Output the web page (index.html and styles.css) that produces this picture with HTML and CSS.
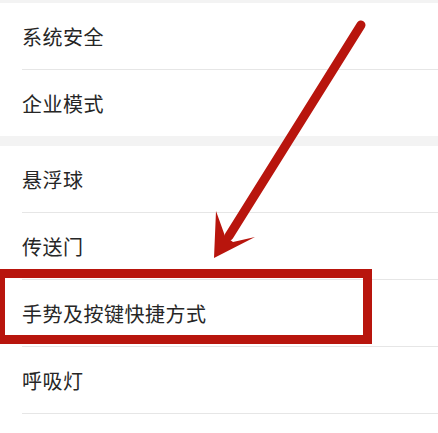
FILE: index.html
```html
<!DOCTYPE html>
<html lang="zh">
<head>
<meta charset="utf-8">
<link rel="stylesheet" href="styles.css">
</head>
<body>
<div class="page">
  <div class="band band-top"></div>
  <div class="group">
    <div class="row"><span class="label">系统安全</span></div>
    <div class="row"><span class="label">企业模式</span></div>
  </div>
  <div class="band band-mid"></div>
  <div class="group">
    <div class="row"><span class="label">悬浮球</span></div>
    <div class="row"><span class="label">传送门</span></div>
    <div class="row"><span class="label">手势及按键快捷方式</span></div>
    <div class="row"><span class="label">呼吸灯</span></div>
    <div class="row"><span class="label"></span></div>
  </div>
  <div class="highlight"></div>
  <svg class="arrow" width="438" height="433" viewBox="0 0 438 433">
    <line x1="361" y1="25" x2="229" y2="236" stroke="#b8150d" stroke-width="9" stroke-linecap="round"/>
    <polygon points="214,258 216,211 225,236 233,242 255,237" fill="#b8150d"/>
  </svg>
</div>
</body>
</html>
```
FILE: styles.css
```css
html, body {
  margin: 0;
  padding: 0;
  background: #ffffff;
}
.page {
  position: relative;
  width: 438px;
  height: 433px;
  overflow: hidden;
  font-family: "Noto Sans CJK SC", "Noto Sans", sans-serif;
  background: #ffffff;
}
.band {
  background: #f3f3f3;
}
.band-top {
  height: 3px;
}
.band-mid {
  height: 10px;
}
.group {
  display: flex;
  flex-direction: column;
}
.row {
  height: 66px;
  display: flex;
  align-items: center;
  margin-left: 22px;
}
.row:not(:last-child) {
  border-bottom: 1px solid #e6e6e6;
}
.label {
  font-size: 20px;
  font-weight: 400;
  color: #262626;
  letter-spacing: 0.5px;
}
.highlight {
  position: absolute;
  left: -4px;
  top: 269px;
  width: 358px;
  height: 57px;
  border: 9px solid #b8150d;
}
.arrow {
  position: absolute;
  left: 0;
  top: 0;
}
```
